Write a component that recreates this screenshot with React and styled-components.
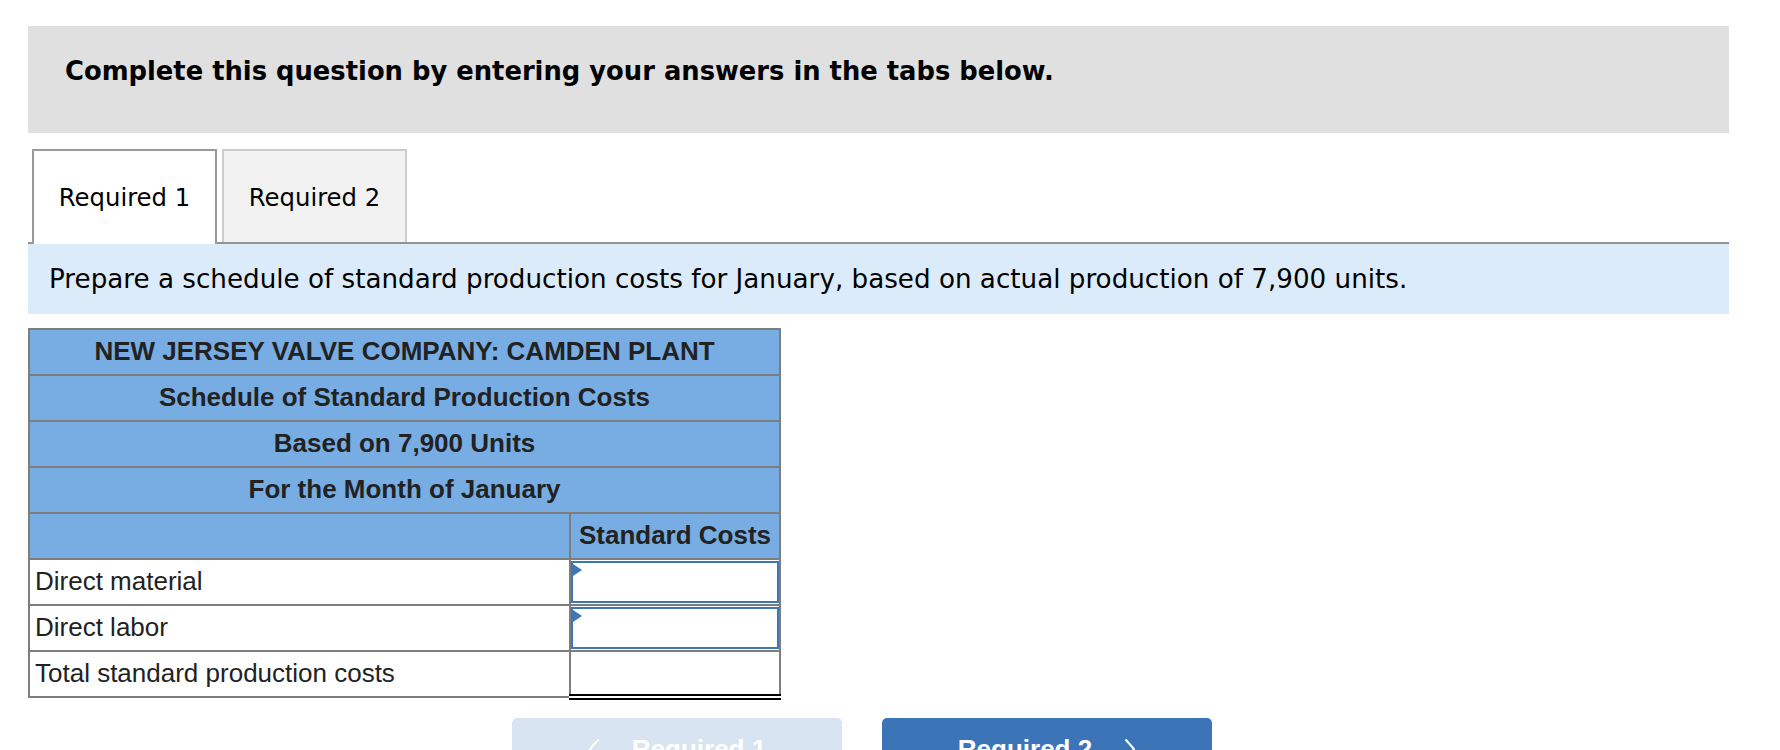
import React from "react";
import styled, { createGlobalStyle } from "styled-components";

const GlobalStyle = createGlobalStyle`
  html, body {
    margin: 0;
    padding: 0;
    background: #ffffff;
  }
  body {
    font-family: "DejaVu Sans", Verdana, sans-serif;
    color: #000;
  }
`;

const Page = styled.div`
  box-sizing: border-box;
  width: 1729px;
  padding: 26px 0 0 28px;
`;

const Banner = styled.div`
  box-sizing: border-box;
  height: 107px;
  background: #e0e0e0;
  padding: 31px 0 0 37px;
  font-family: "DejaVu Sans", Verdana, sans-serif;
  font-weight: bold;
  font-size: 25.8px;
  line-height: 29px;
  color: #000;
`;

const TabBar = styled.div`
  display: flex;
  align-items: flex-start;
  gap: 5px;
  margin-top: 16px;
  padding-left: 4px;
  border-bottom: 2px solid #939393;
`;

const Tab = styled.div`
  box-sizing: border-box;
  width: 185px;
  height: ${(p) => (p.$active ? "95px" : "93px")};
  margin-bottom: ${(p) => (p.$active ? "-2px" : "0")};
  position: relative;
  display: flex;
  align-items: center;
  justify-content: center;
  padding-top: 2px;
  padding-bottom: ${(p) => (p.$active ? "2px" : "0")};
  background: ${(p) => (p.$active ? "#ffffff" : "#f2f2f2")};
  border: 2px solid ${(p) => (p.$active ? "#9a9a9a" : "#cccccc")};
  border-bottom: none;
  font-size: 24.3px;
  color: #000;
`;

const Instruction = styled.div`
  box-sizing: border-box;
  height: 70px;
  display: flex;
  align-items: center;
  padding-left: 21px;
  background: #dcebf9;
  font-size: 26.2px;
  color: #000;
`;

const Sheet = styled.table`
  margin-top: 14px;
  width: 753px;
  border-collapse: collapse;
  font-family: "Liberation Sans", Arial, sans-serif;
  font-size: 26px;
  color: #222;
`;

const Row = styled.tr`
  height: 46px;
`;

const TitleCell = styled.td`
  box-sizing: border-box;
  height: 46px;
  padding: 0 0 2px 0;
  background: #78ade3;
  border: 2px solid #7d7d7d;
  text-align: center;
  font-weight: bold;
  white-space: nowrap;
`;

const LabelCell = styled.td`
  box-sizing: border-box;
  height: 46px;
  padding: 0 0 2px 5px;
  background: #ffffff;
  border: 2px solid #7d7d7d;
  color: #222;
  white-space: nowrap;
`;

const ValueCell = styled.td`
  box-sizing: border-box;
  width: 210px;
  height: 46px;
  padding: 0;
  background: #ffffff;
  border: 2px solid #7d7d7d;
  border-top: ${(p) => (p.$total ? "2px solid #000" : "2px solid #7d7d7d")};
  border-bottom: ${(p) => (p.$total ? "6px double #000" : "2px solid #7d7d7d")};
`;

const InputBox = styled.div`
  box-sizing: border-box;
  position: relative;
  height: 42px;
  margin: 0;
  border: 2px solid #3f76b8;
  background: #ffffff;

  &::before {
    content: "";
    position: absolute;
    left: 0;
    top: 1px;
    width: 0;
    height: 0;
    border-top: 6px solid transparent;
    border-bottom: 6px solid transparent;
    border-left: 9px solid #3f76b8;
  }
`;

const Nav = styled.div`
  display: flex;
  gap: 40px;
  margin-top: 18px;
  padding-left: 484px;
`;

const NavButton = styled.div`
  box-sizing: border-box;
  width: 330px;
  height: 62px;
  display: flex;
  align-items: center;
  justify-content: center;
  gap: 32px;
  border-radius: 5px;
  background: ${(p) => (p.$disabled ? "#d9e4f2" : "#3b75b8")};
  color: #ffffff;
  font-family: "Liberation Sans", Arial, sans-serif;
  font-weight: bold;
  font-size: 26px;
`;

const Chevron = ({ dir }) => (
  <svg width="12" height="22" viewBox="0 0 12 22" fill="none">
    <path
      d={dir === "left" ? "M10 2 L2 11 L10 20" : "M2 2 L10 11 L2 20"}
      stroke="#ffffff"
      strokeWidth="2"
      strokeLinecap="round"
      strokeLinejoin="round"
    />
  </svg>
);

export default function App() {
  return (
    <>
      <GlobalStyle />
      <Page>
        <Banner>Complete this question by entering your answers in the tabs below.</Banner>
        <TabBar>
          <Tab $active>Required 1</Tab>
          <Tab>Required 2</Tab>
        </TabBar>
        <Instruction>
          Prepare a schedule of standard production costs for January, based on actual production of 7,900 units.
        </Instruction>
        <Sheet>
          <tbody>
            <Row>
              <TitleCell colSpan={2}>NEW JERSEY VALVE COMPANY: CAMDEN PLANT</TitleCell>
            </Row>
            <Row>
              <TitleCell colSpan={2}>Schedule of Standard Production Costs</TitleCell>
            </Row>
            <Row>
              <TitleCell colSpan={2}>Based on 7,900 Units</TitleCell>
            </Row>
            <Row>
              <TitleCell colSpan={2}>For the Month of January</TitleCell>
            </Row>
            <Row>
              <TitleCell />
              <TitleCell>Standard Costs</TitleCell>
            </Row>
            <Row>
              <LabelCell>Direct material</LabelCell>
              <ValueCell>
                <InputBox />
              </ValueCell>
            </Row>
            <Row>
              <LabelCell>Direct labor</LabelCell>
              <ValueCell>
                <InputBox />
              </ValueCell>
            </Row>
            <Row>
              <LabelCell>Total standard production costs</LabelCell>
              <ValueCell $total />
            </Row>
          </tbody>
        </Sheet>
        <Nav>
          <NavButton $disabled>
            <Chevron dir="left" />
            <span>Required 1</span>
          </NavButton>
          <NavButton>
            <span>Required 2</span>
            <Chevron dir="right" />
          </NavButton>
        </Nav>
      </Page>
    </>
  );
}
